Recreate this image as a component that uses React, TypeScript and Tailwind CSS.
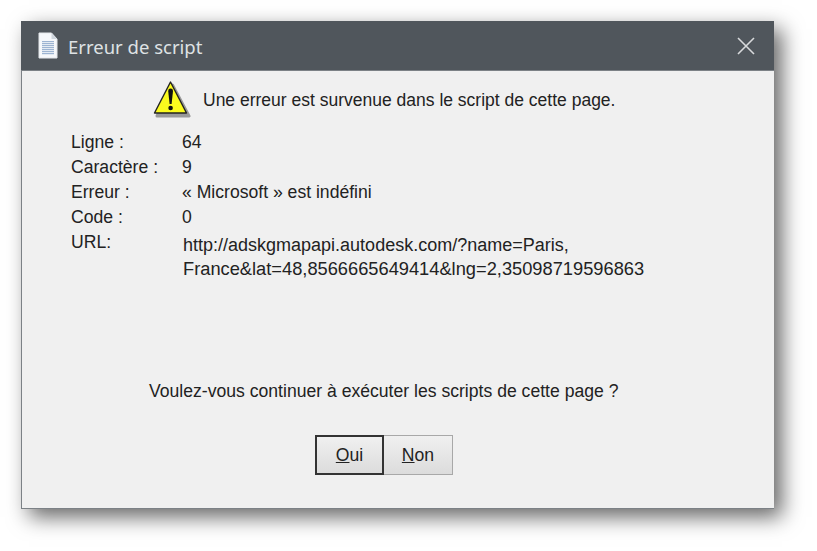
const rows = [
  { label: "Ligne :", value: "64" },
  { label: "Caractère :", value: "9" },
  { label: "Erreur :", value: "« Microsoft » est indéfini" },
  { label: "Code :", value: "0" },
];

function PageIcon() {
  return (
    <svg width="22" height="27" viewBox="0 0 22 27" className="shrink-0">
      <path d="M2 1h12.5l5.5 6v19H2z" fill="#f6f8fb" stroke="#e4e7eb" strokeWidth="1" />
      <path d="M14.5 1v6h5.5z" fill="#cfd6de" />
      {[9, 11, 13, 15, 17, 19, 21].map((y) => (
        <rect key={y} x="5" y={y} width="12" height="1.2" fill="#9db4d2" />
      ))}
    </svg>
  );
}

function WarningIcon() {
  return (
    <svg width="39" height="40" viewBox="0 0 39 40" className="shrink-0">
      <path d="M19.5 5 L36 36 H4 Z" fill="#6b6b6b" opacity="0.65" strokeLinejoin="round" stroke="#6b6b6b" strokeWidth="3" />
      <path d="M17.5 2 L33.5 33 H1.5 Z" fill="#fbfb1e" stroke="#222" strokeWidth="1.4" strokeLinejoin="round" />
      <path d="M15.2 11 a2.4 2.4 0 0 1 4.8 0 L18.6 24 H16.6 Z" fill="#111" />
      <circle cx="17.6" cy="28" r="2.3" fill="#111" />
    </svg>
  );
}

export default function App() {
  return (
    <div className="h-[551px] w-[817px] overflow-hidden bg-white pl-[21px] pt-[21px] font-['Liberation_Sans',sans-serif] text-[17.6px] leading-[25px] text-[#222]">
      <div className="flex h-[488px] w-[753px] flex-col border-b border-l border-[#7c8186] bg-[#f0f0f0] shadow-[8px_8px_20px_rgba(0,0,0,0.6)]">
        <div className="-ml-px flex h-[50px] shrink-0 items-center border-b border-[#7c8186] bg-[#50565c] pl-[16px] pr-[19px]">
          <PageIcon />
          <span className="ml-[9px] mt-[2px] font-['Noto_Sans',sans-serif] text-[18.5px] text-[#dfe2e4]">Erreur de script</span>
          <svg width="18" height="18" viewBox="0 0 18 18" className="ml-auto">
            <path d="M1 1 L17 17 M17 1 L1 17" stroke="#d8dadc" strokeWidth="1.6" fill="none" />
          </svg>
        </div>

        <div className="flex flex-1 flex-col">
          <div className="ml-[131px] mt-[9px] flex h-[40px] items-center gap-[11px]">
            <WarningIcon />
            <span className="text-[17.5px]">Une erreur est survenue dans le script de cette page.</span>
          </div>

          <div className="ml-[49px] mt-[10px] flex flex-col">
            {rows.map((row) => (
              <div key={row.label} className="flex">
                <span className="w-[111px]">{row.label}</span>
                <span>{row.value}</span>
              </div>
            ))}
            <div className="flex">
              <span className="w-[112px]">URL:</span>
              <span className="mt-[3px] text-[18.28px] leading-[23px]">
                <span className="text-[18px]">http://adskgmapapi.autodesk.com/?name=Paris,</span>
                <br />
                France&amp;lat=48,8566665649414&amp;lng=2,35098719596863
              </span>
            </div>
          </div>

          <p className="ml-[127px] mt-[99px]">Voulez-vous continuer à exécuter les scripts de cette page ?</p>

          <div className="ml-[293px] mt-[31px] flex">
            <button className="h-[40px] w-[69px] border-2 border-[#333] bg-gradient-to-b from-[#f0f0f0] to-[#dcdcdc] text-[#222]">
              <span className="underline">O</span>ui
            </button>
            <button className="h-[40px] w-[69px] border border-l-0 border-[#a8a8a8] bg-gradient-to-b from-[#f0f0f0] to-[#dcdcdc] text-[#222]">
              <span className="underline">N</span>on
            </button>
          </div>
        </div>
      </div>
    </div>
  );
}
